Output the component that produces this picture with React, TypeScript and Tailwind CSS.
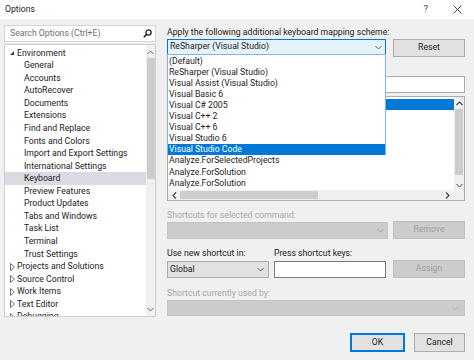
import React from "react";

const treeItems = [
  { label: "Environment", level: 0, open: true },
  { label: "General", level: 1 },
  { label: "Accounts", level: 1 },
  { label: "AutoRecover", level: 1 },
  { label: "Documents", level: 1 },
  { label: "Extensions", level: 1 },
  { label: "Find and Replace", level: 1 },
  { label: "Fonts and Colors", level: 1 },
  { label: "Import and Export Settings", level: 1 },
  { label: "International Settings", level: 1 },
  { label: "Keyboard", level: 1, selected: true },
  { label: "Preview Features", level: 1 },
  { label: "Product Updates", level: 1 },
  { label: "Tabs and Windows", level: 1 },
  { label: "Task List", level: 1 },
  { label: "Terminal", level: 1 },
  { label: "Trust Settings", level: 1 },
  { label: "Projects and Solutions", level: 0 },
  { label: "Source Control", level: 0 },
  { label: "Work Items", level: 0 },
  { label: "Text Editor", level: 0 },
  { label: "Debugging", level: 0 },
];

const schemes = [
  "(Default)",
  "ReSharper (Visual Studio)",
  "Visual Assist (Visual Studio)",
  "Visual Basic 6",
  "Visual C# 2005",
  "Visual C++ 2",
  "Visual C++ 6",
  "Visual Studio 6",
  "Visual Studio Code",
];

const commands = [
  "Analyze.AnalyzeSolution",
  "Analyze.CodeMetrics",
  "Analyze.Configure",
  "Analyze.ForProject",
  "Analyze.ForSelected",
  "Analyze.ForSelectedProjects",
  "Analyze.ForSolution",
  "Analyze.ForSolution",
];

const Chevron = ({ color = "#606060" }: { color?: string }) => (
  <svg width="7" height="5" viewBox="0 0 7 5">
    <path d="M0.5 1 L3.5 4 L6.5 1" fill="none" stroke={color} strokeWidth="1" />
  </svg>
);

const TreeArrow = ({ open }: { open?: boolean }) =>
  open ? (
    <svg width="6" height="6" viewBox="0 0 6 6">
      <path d="M5 1 L5 5 L1 5 Z" fill="#404040" />
    </svg>
  ) : (
    <svg width="5" height="8" viewBox="0 0 5 8">
      <path d="M0.5 0.5 L4.5 4 L0.5 7.5 Z" fill="none" stroke="#707070" strokeWidth="1" />
    </svg>
  );

const App = () => {
  return (
    <div className="w-[474px] h-[360px] bg-[#f0f0f0] flex flex-col overflow-hidden text-[#222] font-['Roboto','Liberation_Sans',sans-serif] text-[8.7px]">
      {/* title bar */}
      <div className="h-[19px] bg-white flex items-center shrink-0">
        <span className="ml-[5px] text-[8.7px]">Options</span>
        <span className="ml-auto text-[9.5px] text-[#444] mr-[25px]">?</span>
        <svg width="9" height="9" viewBox="0 0 9 9" className="mr-[12px]">
          <path d="M0.5 0.5 L8.5 8.5 M8.5 0.5 L0.5 8.5" stroke="#333" strokeWidth="0.9" />
        </svg>
      </div>

      <div className="flex flex-1">
        {/* left pane */}
        <div className="ml-[4px] mt-[6px] w-[152px] flex flex-col">
          <div className="h-[17px] bg-white border border-[#d6d6d6] flex items-center pl-[5px] pr-[3px]">
            <span className="text-[#707070]">Search Options (Ctrl+E)</span>
            <svg width="9" height="9" viewBox="0 0 9 9" className="ml-auto">
              <circle cx="5.5" cy="3.5" r="2.6" fill="none" stroke="#1e1e1e" strokeWidth="1.3" />
              <path d="M3.6 5.4 L0.8 8.2" stroke="#1e1e1e" strokeWidth="1.6" />
            </svg>
          </div>
          <div className="mt-[2px] h-[273px] bg-white border border-[#cfcfcf] flex overflow-hidden">
            <div className="flex-1 pt-[2px] overflow-hidden">
              {treeItems.map((item, idx) => (
                <div
                  key={idx}
                  className={`h-[12.55px] flex items-center whitespace-nowrap ${item.selected ? "bg-[#dadae3]" : ""}`}
                >
                  {item.level === 0 ? (
                    <>
                      <span className="w-[12px] flex justify-center pl-[2px]">
                        <TreeArrow open={item.open} />
                      </span>
                      <span>{item.label}</span>
                    </>
                  ) : (
                    <span className="ml-[19px]">{item.label}</span>
                  )}
                </div>
              ))}
            </div>
            <div className="w-[9px] bg-[#f0f0f0] flex flex-col items-center">
              <svg width="7" height="5" viewBox="0 0 7 5" className="mt-[5px]">
                <path d="M0.5 4 L3.5 1 L6.5 4" fill="none" stroke="#606060" strokeWidth="1" />
              </svg>
              <div className="mt-[3px] w-[8px] h-[121px] bg-[#cdcdcd]" />
              <div className="mt-auto mb-[4px]">
                <Chevron />
              </div>
            </div>
          </div>
        </div>

        {/* right pane */}
        <div className="ml-[11px] w-[298px] flex flex-col relative">
          <div className="mt-[7px] h-[12px] leading-[12px]">Apply the following additional keyboard mapping scheme:</div>
          <div className="mt-[1px] flex items-start">
            <div className="w-[219px] h-[16px] bg-[#e5f1fb] border border-[#0078d7] flex items-center pl-[2px] pr-[3px]">
              <span>ReSharper (Visual Studio)</span>
              <span className="ml-auto">
                <Chevron />
              </span>
            </div>
            <div className="ml-[7px] w-[72px] h-[18px] bg-[#e1e1e1] border border-[#adadad] flex items-center justify-center">
              Reset
            </div>
          </div>
          <div className="mt-[6px] h-[12px] leading-[12px]">Show commands containing:</div>
          <div className="mt-[1px] h-[17px] bg-white border border-[#adadad]" />
          <div className="mt-[3px] h-[105px] bg-white border border-[#adadad] flex flex-col">
            <div className="flex flex-1 overflow-hidden">
              <div className="flex-1 pt-[2px] overflow-hidden">
                {commands.map((c, idx) => (
                  <div
                    key={idx}
                    className={`h-[11.3px] leading-[11.3px] pl-[1px] whitespace-nowrap ${idx === 0 ? "bg-[#0078d7] text-white" : ""}`}
                  >
                    {c}
                  </div>
                ))}
              </div>
              <div className="w-[10px] bg-[#f0f0f0] flex flex-col items-center">
                <svg width="7" height="5" viewBox="0 0 7 5" className="mt-[4px]">
                  <path d="M0.5 4 L3.5 1 L6.5 4" fill="none" stroke="#404040" strokeWidth="1.1" />
                </svg>
                <div className="mt-[3px] w-[8px] h-[66px] bg-[#cdcdcd]" />
                <div className="mt-auto mb-[2px]">
                  <Chevron color="#404040" />
                </div>
              </div>
            </div>
            <div className="h-[10px] flex items-center bg-[#f0f0f0]">
              <svg width="5" height="7" viewBox="0 0 5 7" className="ml-[4px]">
                <path d="M4 0.5 L1 3.5 L4 6.5" fill="none" stroke="#404040" strokeWidth="1.1" />
              </svg>
              <div className="ml-[3px] w-[138px] h-[8px] bg-[#cdcdcd]" />
              <svg width="5" height="7" viewBox="0 0 5 7" className="ml-auto mr-[14px]">
                <path d="M1 0.5 L4 3.5 L1 6.5" fill="none" stroke="#404040" strokeWidth="1.1" />
              </svg>
            </div>
          </div>

          <div className="mt-[8px] h-[12px] leading-[12px] text-[#a8a8a8]">Shortcuts for selected command:</div>
          <div className="mt-[1px] flex items-start">
            <div className="w-[221px] h-[17px] bg-[#cccccc] border border-[#c4c4c4] flex items-center justify-end pr-[3px]">
              <Chevron color="#a0a0a0" />
            </div>
            <div className="ml-[5px] -mt-[1px] w-[72px] h-[18px] bg-[#cccccc] border border-[#bfbfbf] flex items-center justify-center text-[#a0a0a0]">
              Remove
            </div>
          </div>

          <div className="mt-[8px] flex h-[12px] leading-[12px]">
            <span className="w-[107px]">Use new shortcut in:</span>
            <span>Press shortcut keys:</span>
          </div>
          <div className="mt-[2px] flex items-start">
            <div className="w-[102px] h-[17px] bg-[#e1e1e1] border border-[#adadad] flex items-center pl-[2px] pr-[4px]">
              <span>Global</span>
              <span className="ml-auto">
                <Chevron />
              </span>
            </div>
            <div className="ml-[5px] w-[112px] h-[17px] bg-white border border-[#7a7a7a]" />
            <div className="ml-[7px] -mt-[1px] w-[72px] h-[18px] bg-[#cccccc] border border-[#bfbfbf] flex items-center justify-center text-[#a0a0a0]">
              Assign
            </div>
          </div>

          <div className="mt-[9px] h-[12px] leading-[12px] text-[#a8a8a8]">Shortcut currently used by:</div>
          <div className="mt-[1px] h-[16px] bg-[#cccccc] border border-[#c4c4c4] flex items-center justify-end pr-[5px]">
            <Chevron color="#b0b0b0" />
          </div>

          <div className="mt-[17px] flex justify-end">
            <div className="w-[55px] h-[19px] bg-[#e1e1e1] border-2 border-[#0078d7] flex items-center justify-center">
              OK
            </div>
            <div className="ml-[9px] w-[51px] h-[19px] bg-[#e1e1e1] border border-[#adadad] flex items-center justify-center">
              Cancel
            </div>
          </div>

          {/* open dropdown */}
          <div className="absolute left-0 top-[35px] w-[219px] h-[101px] bg-white border border-[#7eb4ea] pt-[1px]">
            {schemes.map((s, idx) => (
              <div
                key={idx}
                className={`h-[11px] leading-[11px] pl-[1px] whitespace-nowrap ${idx === schemes.length - 1 ? "bg-[#0078d7] text-white" : ""}`}
              >
                {s}
              </div>
            ))}
          </div>
        </div>
      </div>
    </div>
  );
};

export default App;
